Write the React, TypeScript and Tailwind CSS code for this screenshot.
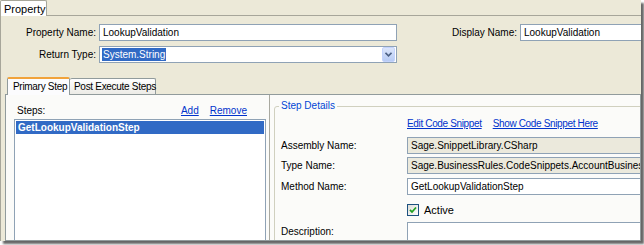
import React from "react";

const font = "font-['Liberation_Sans',Arial,sans-serif]";

const Input = ({ value, readOnly, width }: { value: string; readOnly?: boolean; width: string }) => (
  <div
    className={`${width} h-[17px] shrink-0 border border-[#8FA2B5] ${readOnly ? "bg-[#EBE9DC]" : "bg-white"} flex items-center pl-[3px] whitespace-nowrap overflow-hidden`}
  >
    {value}
  </div>
);

const App = () => {
  return (
    <div className={`w-[644px] h-[245px] bg-white overflow-hidden text-[10px] leading-[12px] text-black ${font}`}>
      <div className="w-[641px] h-[241px] bg-[#ECE9D8] flex flex-col shadow-[3px_3px_2px_rgba(0,0,0,0.6)] overflow-hidden">
        {/*// - Top tab strip */}
        <div className="h-[16px] flex items-end border-b border-[#A7A69A] shrink-0">
          <div className="w-[47px] h-[16px] -mb-px bg-white border border-b-0 border-[#A7A69A] rounded-t-[2px] pl-[3px] pt-[2px] text-[11px]">
            Property
          </div>
        </div>

        {/*// - Property page */}
        <div className="flex-1 flex flex-col border-l border-[#A7A69A] min-h-0">
          <div className="pt-[8px] flex flex-col gap-[5px]">
            <div className="flex items-center">
              <div className="w-[98px] shrink-0 text-right pr-[3px]">Property Name:</div>
              <Input value="LookupValidation" width="w-[298px]" />
              <div className="w-[123px] shrink-0 text-right pr-[3px]">Display Name:</div>
              <Input value="LookupValidation" width="w-[130px]" />
            </div>
            <div className="flex items-center">
              <div className="w-[98px] shrink-0 text-right pr-[3px]">Return Type:</div>
              <div className="w-[298px] shrink-0 h-[17px] border border-[#8FA2B5] bg-white flex items-center pl-[2px] pr-[1px]">
                <span className="bg-[#316AC5] text-white px-[1px] leading-[13px]">System.String</span>
                <div className="ml-auto w-[13px] h-[15px] rounded-[2px] bg-[linear-gradient(#DCE6FB,#B7CBF4)] border border-[#C3D3FD] flex items-center justify-center">
                  <svg width="7" height="5" viewBox="0 0 7 5">
                    <path d="M0.5 0.8 L3.5 3.8 L6.5 0.8" fill="none" stroke="#4D6185" strokeWidth="1.6" />
                  </svg>
                </div>
              </div>
            </div>
          </div>

          {/*// - Lower tab control */}
          <div className="mt-[14px] ml-[4px] flex-1 flex flex-col min-h-0">
            <div className="h-[17px] flex items-end pl-[2px] shrink-0">
              <div className="relative z-10 w-[63px] h-[18px] -mb-px bg-[#FCFCFE] border border-b-0 border-[#919B9C] border-t-[2px] border-t-[#F1A33B] rounded-t-[2px] pl-[5px] pt-[2px] whitespace-nowrap tracking-[-0.3px]">
                Primary Step
              </div>
              <div className="w-[86px] h-[16px] bg-[linear-gradient(#FFFFFF,#ECEBE6)] border border-l-0 border-b-0 border-[#919B9C] rounded-t-[2px] pl-[4px] pt-[2px] whitespace-nowrap tracking-[-0.3px]">
                Post Execute Steps
              </div>
            </div>

            <div className="flex-1 flex border border-[#919B9C] bg-[#FBFBF9] min-h-0">
              {/*// - Steps list */}
              <div className="w-[263px] shrink-0 flex flex-col pt-[9px]">
                <div className="h-[14px] flex items-center pl-[11px] pr-[22px]">
                  <div>Steps:</div>
                  <div className="ml-auto text-[#0033CC] underline">Add</div>
                  <div className="ml-[11px] text-[#0033CC] underline">Remove</div>
                </div>
                <div className="mt-[1px] ml-[8px] w-[252px] flex-1 bg-white border border-[#8FA2B5] border-b-0 p-px">
                  <div className="h-[13px] bg-[#316AC5] text-white font-bold pl-[2px] leading-[13px]">
                    GetLookupValidationStep
                  </div>
                </div>
              </div>

              {/*// - Step details */}
              <div className="flex-1 border-l border-[#A9A9A0] overflow-hidden pl-[4px] pt-[5px]">
                <fieldset className="w-[420px] border border-[#D0D0BF] rounded-[3px] pl-[3px] pb-[8px]">
                  <legend className="ml-[1px] px-[2px] text-[#0046D5] leading-[12px]">Step Details</legend>
                  <div className="pt-[5px] pl-[3px] flex flex-col">
                    <div className="h-[14px] flex items-center pl-[126px] gap-[11px] text-[#0033CC] underline tracking-[-0.35px]">
                      <span>Edit Code Snippet</span>
                      <span>Show Code Snippet Here</span>
                    </div>
                    <div className="mt-[6px] flex items-center">
                      <div className="w-[126px] shrink-0">Assembly Name:</div>
                      <Input value="Sage.SnippetLibrary.CSharp" readOnly width="w-[260px]" />
                    </div>
                    <div className="mt-[3px] flex items-center">
                      <div className="w-[126px] shrink-0">Type Name:</div>
                      <Input value="Sage.BusinessRules.CodeSnippets.AccountBusinessRules" readOnly width="w-[260px]" />
                    </div>
                    <div className="mt-[4px] flex items-center">
                      <div className="w-[126px] shrink-0">Method Name:</div>
                      <Input value="GetLookupValidationStep" width="w-[260px]" />
                    </div>
                    <div className="mt-[8px] h-[13px] flex items-center pl-[126px]">
                      <div className="w-[12px] h-[12px] border border-[#1C5180] bg-[linear-gradient(135deg,#DCDCD7,#FFFFFF)] flex items-center justify-center">
                        <svg width="8" height="8" viewBox="0 0 8 8">
                          <path d="M1 3.8 L3 6 L7 1.5" fill="none" stroke="#21A121" strokeWidth="1.8" />
                        </svg>
                      </div>
                      <span className="ml-[5px] text-[11px]">Active</span>
                    </div>
                    <div className="mt-[6px] flex items-start">
                      <div className="w-[126px] shrink-0 pt-[4px]">Description:</div>
                      <div className="w-[260px] h-[30px] border border-[#8FA2B5] bg-white" />
                    </div>
                  </div>
                </fieldset>
              </div>
            </div>
          </div>
        </div>
      </div>
    </div>
  );
};

export default App;
